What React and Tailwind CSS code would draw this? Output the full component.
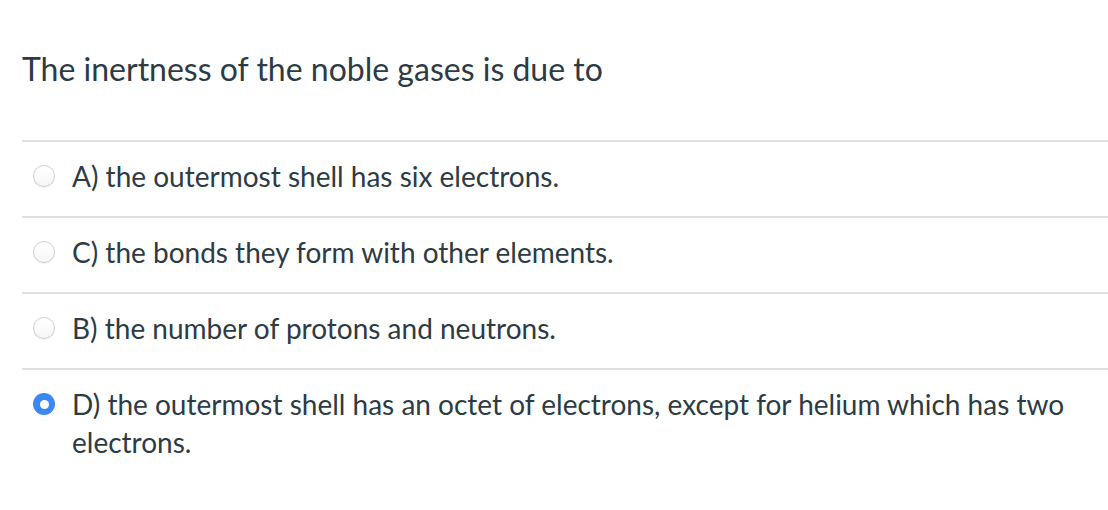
import React from 'react'

const options = [
    { id: 'a', label: 'A) the outermost shell has six electrons.', checked: false },
    { id: 'c', label: 'C) the bonds they form with other elements.', checked: false },
    { id: 'b', label: 'B) the number of protons and neutrons.', checked: false },
    { id: 'd', label: 'D) the outermost shell has an octet of electrons, except for helium which has two electrons.', checked: true },
]

function Radio({ checked }) {
    if (checked) {
        return (
            <span className="mt-[8px] flex h-[22px] w-[22px] shrink-0 items-center justify-center rounded-full bg-[#3c87f4]">
                <span className="h-[9px] w-[9px] rounded-full bg-white" />
            </span>
        )
    }
    return (
        <span className="mt-[8px] h-[22px] w-[22px] shrink-0 rounded-full border border-[#d0d0d0] bg-gradient-to-b from-white to-[#f6f6f6] shadow-[0_1px_1px_rgba(0,0,0,0.06)]" />
    )
}

export default function App() {
    return (
        <div className="h-[510px] w-full bg-white pl-[22px] text-[#2d3b45]" style={{ fontFamily: 'Lato, "Open Sans", sans-serif' }}>
            <div className="flex h-[140px] items-center pb-[3px]">
                <h2 className="text-[32px] leading-[40px] font-normal">The inertness of the noble gases is due to</h2>
            </div>
            <div>
                {options.map(o => (
                    <label key={o.id} className="flex min-h-[76px] items-start gap-[17px] border-t-2 border-[#e0e0e0] pt-[15px] pb-[21px] pl-[11px] pr-[30px]">
                        <Radio checked={o.checked} />
                        <span className="text-[28px] leading-[38px]">{o.label}</span>
                    </label>
                ))}
            </div>
        </div>
    )
}
